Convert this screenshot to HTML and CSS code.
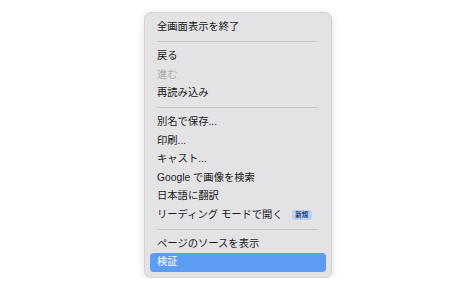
FILE: index.html
```html
<!DOCTYPE html>
<html lang="ja">
<head>
<meta charset="utf-8">
<link rel="stylesheet" href="styles.css">
</head>
<body>
<div class="stage">
  <div class="menu">
    <div class="item">全画面表示を終了</div>
    <div class="sep"></div>
    <div class="item">戻る</div>
    <div class="item disabled">進む</div>
    <div class="item">再読み込み</div>
    <div class="sep"></div>
    <div class="item">別名で保存...</div>
    <div class="item">印刷...</div>
    <div class="item">キャスト...</div>
    <div class="item">Google で画像を検索</div>
    <div class="item">日本語に翻訳</div>
    <div class="item">リーディング モードで開く<span class="badge">新規</span></div>
    <div class="sep"></div>
    <div class="item">ページのソースを表示</div>
    <div class="item active">検証</div>
  </div>
</div>
</body>
</html>
```
FILE: styles.css
```css
html, body {
  margin: 0;
  padding: 0;
  background: #ffffff;
}
.stage {
  padding: 12px 0 0 144px;
}
.menu {
  width: 176px;
  padding: 5px;
  background: #e3e3e5;
  border: 1px solid #d2d2d4;
  border-radius: 7px;
  box-shadow: 0 2px 8px rgba(0,0,0,0.12);
  font-family: "Liberation Sans", "Noto Sans CJK JP", sans-serif;
  font-size: 10.3px;
  color: #1a1a1a;
  display: flex;
  flex-direction: column;
}
.item {
  height: 18.5px;
  line-height: 18.5px;
  padding-left: 7px;
  border-radius: 4px;
  display: flex;
  align-items: center;
  white-space: nowrap;
}
.item.disabled {
  color: #a9a9ab;
}
.item.active {
  background: #5d9cf4;
  color: #ffffff;
}
.sep {
  height: 1px;
  margin: 4.75px 8px 4.75px 7px;
  background: #c9c9cb;
}
.badge {
  margin-left: 9px;
  height: 10px;
  line-height: 10px;
  padding: 0 3.5px;
  border-radius: 3px;
  background: #b9d1f3;
  color: #1f3f7a;
  font-size: 6.5px;
  font-weight: bold;
}
```
